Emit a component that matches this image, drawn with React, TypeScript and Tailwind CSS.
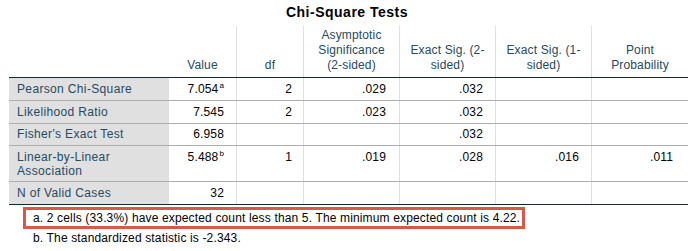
import React from "react";

const cols = "grid grid-cols-[160px_67px_67px_96px_96px_96px_97px]";

type Cell = { v: string; sup?: string };

const rows: { label: string[]; cells: (Cell | null)[]; h: string; top?: boolean; last?: boolean }[] = [
  { label: ["Pearson Chi-Square"], cells: [{ v: "7.054", sup: "a" }, { v: "2" }, { v: ".029" }, { v: ".032" }, null, null], h: "h-[23px]" },
  { label: ["Likelihood Ratio"], cells: [{ v: "7.545" }, { v: "2" }, { v: ".023" }, { v: ".032" }, null, null], h: "h-[23px]" },
  { label: ["Fisher's Exact Test"], cells: [{ v: "6.958" }, null, null, { v: ".032" }, null, null], h: "h-[22px]" },
  { label: ["Linear-by-Linear", "Association"], cells: [{ v: "5.488", sup: "b" }, { v: "1" }, { v: ".019" }, { v: ".028" }, { v: ".016" }, { v: ".011" }], h: "h-[36px]", top: true },
  { label: ["N of Valid Cases"], cells: [{ v: "32" }, null, null, null, null, null], h: "h-[23px]", last: true },
];

const padR = ["pr-[12px]", "pr-[11px]", "pr-[13px]", "pr-[12px]", "pr-[12px]", "pr-[15px]"];

export default function App() {
  return (
    <div
      className="w-[700px] h-[251px] bg-white text-[12px] tracking-[0.15px] text-[#010205] overflow-hidden"
      style={{ fontFamily: '"Liberation Sans", Arial, sans-serif' }}
    >
      <div className="h-[26px] flex items-center justify-center pb-[2px] text-[14px] tracking-[0.5px] font-bold text-black">
        <span className="mr-[6px]">Chi-Square Tests</span>
      </div>
      <div className="ml-[9px] w-[679px]">
        {/* header */}
        <div className={`${cols} h-[52px] border-b border-[#152935] text-[#264a60] leading-[15px]`}>
          <div />
          <div className="flex items-end justify-center pb-[4px]">Value</div>
          <div className="flex items-end justify-center pb-[4px] border-l border-[#e0e0e0]">df</div>
          <div className="flex items-end justify-center pb-[4px] border-l border-[#e0e0e0] text-center">
            Asymptotic
            <br />
            Significance
            <br />
            (2-sided)
          </div>
          <div className="flex items-end justify-center pb-[4px] border-l border-[#e0e0e0] text-center">
            Exact Sig. (2-
            <br />
            sided)
          </div>
          <div className="flex items-end justify-center pb-[4px] border-l border-[#e0e0e0] text-center">
            Exact Sig. (1-
            <br />
            sided)
          </div>
          <div className="flex items-end justify-center pb-[4px] border-l border-[#e0e0e0] text-center">
            Point
            <br />
            Probability
          </div>
        </div>
        {rows.map((r, i) => (
          <div
            key={i}
            className={`${cols} ${r.h} border-b ${r.last ? "border-[#152935]" : "border-[#aeaeae]"}`}
          >
            <div
              className={`bg-[#e0e0e0] text-[#264a60] pl-[8px] tracking-[0.35px] flex flex-col ${
                r.top ? "justify-start pt-[4px] leading-[14px]" : "justify-center leading-[17px]"
              }`}
            >
              {r.label.map((l, k) => (
                <span key={k}>{l}</span>
              ))}
            </div>
            {r.cells.map((c, j) => (
              <div
                key={j}
                className={`flex justify-end ${padR[j]} ${j > 0 ? "border-l border-[#e0e0e0]" : ""} ${
                  r.top ? "items-start pt-[4px] leading-[14px]" : "items-center leading-[17px]"
                }`}
              >
                {c && (
                  <span className="whitespace-nowrap">
                    {c.v}
                    {c.sup && <sup className="text-[8px] top-[-5px] ml-[1px]">{c.sup}</sup>}
                  </span>
                )}
              </div>
            ))}
          </div>
        ))}
      </div>
      <div className="ml-[23px] mt-[2px] w-[502px] h-[22px] border-[3px] border-[#d65a4c] flex items-center pl-[7px] leading-[15px]">
        a. 2 cells (33.3%) have expected count less than 5. The minimum expected count is 4.22.
      </div>
      <div className="ml-[33px] mt-[2px] leading-[15px]">b. The standardized statistic is -2.343.</div>
    </div>
  );
}
